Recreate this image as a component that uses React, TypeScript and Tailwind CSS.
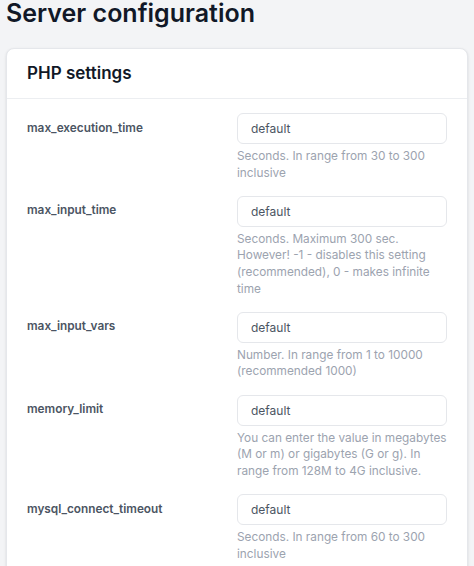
const settings = [
  {
    name: "max_execution_time",
    help: "Seconds. In range from 30 to 300 inclusive",
  },
  {
    name: "max_input_time",
    help: "Seconds. Maximum 300 sec. However! -1 - disables this setting (recommended), 0 - makes infinite time",
  },
  {
    name: "max_input_vars",
    help: "Number. In range from 1 to 10000 (recommended 1000)",
  },
  {
    name: "memory_limit",
    help: "You can enter the value in megabytes (M or m) or gigabytes (G or g). In range from 128M to 4G inclusive.",
  },
  {
    name: "mysql_connect_timeout",
    help: "Seconds. In range from 60 to 300 inclusive",
  },
];

function SettingRow({ name, help }: { name: string; help: string }) {
  return (
    <div className="grid grid-cols-2">
      <div className="flex h-[31px] items-center text-[11.8px] font-semibold text-[#4b5563]">
        {name}
      </div>
      <div>
        <input
          type="text"
          defaultValue="default"
          className="block h-[31px] w-full rounded-md border border-[#e5e7eb] bg-white px-[13px] text-[12px] text-[#4b5563] outline-none"
        />
        <p className="mt-1 text-[11.8px] leading-[16.67px] text-[#9ca3af]">{help}</p>
      </div>
    </div>
  );
}

export default function App() {
  return (
    <div
      className="min-h-[566px] overflow-hidden bg-[#f3f4f6] px-[6px]"
      style={{ fontFamily: "Inter, 'Noto Sans', sans-serif" }}
    >
      <h1 className="text-[25px] font-semibold leading-[26px] text-[#111827]">
        Server configuration
      </h1>
      <div className="mt-[22px] rounded-lg border border-[#e5e7eb] bg-white shadow-sm">
        <div className="flex h-[50px] items-center border-b border-[#eceef1] px-5">
          <h2 className="text-[17px] font-semibold text-[#111827]">PHP settings</h2>
        </div>
        <div className="flex flex-col gap-[14.4px] px-5 pt-[14px] pb-6">
          {settings.map((s) => (
            <SettingRow key={s.name} name={s.name} help={s.help} />
          ))}
        </div>
      </div>
    </div>
  );
}
